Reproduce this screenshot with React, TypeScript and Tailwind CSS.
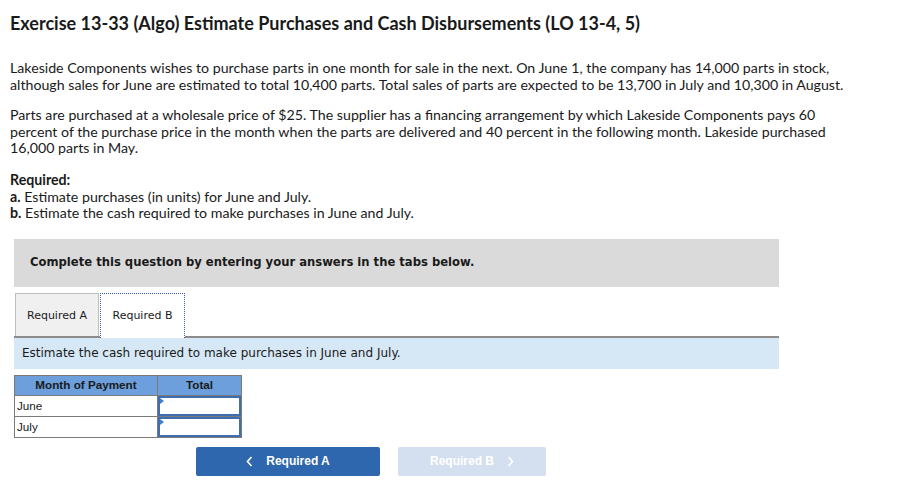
import React from 'react';

const body = "font-['Lato','Open_Sans',sans-serif]";
const verdana = "font-['DejaVu_Sans','Verdana',sans-serif]";
const arial = "font-['Liberation_Sans','Arial',sans-serif]";

function AnswerCell() {
  return (
    <td className="border border-[#7a7a7a] p-0 h-[20px]">
      <div className="relative h-[20px] border-2 border-[#3f6eb0] bg-white">
        <span className="absolute left-0 top-0 w-0 h-0 border-t-[3px] border-b-[3px] border-l-[4px] border-t-transparent border-b-transparent border-l-[#3f7fd0]" />
      </div>
    </td>
  );
}

function Chevron({ dir }: { dir: 'left' | 'right' }) {
  return (
    <svg width="7" height="11" viewBox="0 0 7 11" fill="none" stroke="currentColor" strokeWidth="1.6">
      {dir === 'left' ? <path d="M5.5 1 L1.5 5.5 L5.5 10" /> : <path d="M1.5 1 L5.5 5.5 L1.5 10" />}
    </svg>
  );
}

export default function App() {
  return (
    <div className="w-[920px] h-[492px] bg-white text-[#1a1a1a] overflow-hidden">
      <div className="pl-[10px] pt-[12px] whitespace-nowrap">
        <h1 className={`${body} font-bold text-[18px] leading-[22px]`}>
          Exercise 13-33 (Algo) Estimate Purchases and Cash Disbursements (LO 13-4, 5)
        </h1>

        <p className={`${body} text-[14.2px] leading-[16.5px] mt-[26px]`}>
          Lakeside Components wishes to purchase parts in one month for sale in the next. On June 1, the company has 14,000 parts in stock,
          <br />
          although sales for June are estimated to total 10,400 parts. Total sales of parts are expected to be 13,700 in July and 10,300 in August.
        </p>

        <p className={`${body} text-[14.2px] leading-[16.5px] mt-[14px]`}>
          Parts are purchased at a wholesale price of $25. The supplier has a financing arrangement by which Lakeside Components pays 60
          <br />
          percent of the purchase price in the month when the parts are delivered and 40 percent in the following month. Lakeside purchased
          <br />
          16,000 parts in May.
        </p>

        <div className={`${body} text-[14.2px] leading-[16.5px] mt-[15.5px]`}>
          <div className="font-bold">Required:</div>
          <div><span className="font-bold">a.</span> Estimate purchases (in units) for June and July.</div>
          <div><span className="font-bold">b.</span> Estimate the cash required to make purchases in June and July.</div>
        </div>
      </div>

      <div className="ml-[14px] w-[765px]">
        <div className={`${verdana} mt-[17px] h-[48px] bg-[#dadada] flex items-center pl-[16px] text-[11.6px] font-bold`}>
          Complete this question by entering your answers in the tabs below.
        </div>

        <div className={`${verdana} mt-[6px] flex items-end text-[11px] border-b-2 border-[#8c8c8c] pl-[1px]`}>
          <div className="w-[84px] h-[43px] pt-[3px] flex items-center justify-center bg-[#f0f0f0] border border-b-0 border-[#bdbdbd]">
            Required A
          </div>
          <div className="ml-[1px] -mb-[2px] w-[85px] h-[45px] pt-[1px] flex items-center justify-center bg-white border border-b-0 border-dotted border-[#2f5fa8]">
            Required B
          </div>
        </div>

        <div className={`${verdana} h-[31px] bg-[#d6e8f6] flex items-center pl-[8px] text-[12px]`}>
          Estimate the cash required to make purchases in June and July.
        </div>

        <table className={`${arial} mt-[6px] border-collapse text-[11.7px]`}>
          <thead>
            <tr className="bg-[#6c9fdc] h-[20px]">
              <th className="w-[143px] border border-[#7a7a7a] font-bold text-[#1a1a1a] p-0">Month of Payment</th>
              <th className="w-[84px] border border-[#7a7a7a] font-bold text-[#1a1a1a] p-0">Total</th>
            </tr>
          </thead>
          <tbody>
            <tr>
              <td className="border border-[#7a7a7a] pl-[2px] h-[20px] p-0">June</td>
              <AnswerCell />
            </tr>
            <tr>
              <td className="border border-[#7a7a7a] pl-[2px] h-[20px] p-0">July</td>
              <AnswerCell />
            </tr>
          </tbody>
        </table>

        <div className={`${arial} mt-[9px] ml-[182px] flex gap-[18px] text-[12px] font-bold text-white`}>
          <button className="w-[184px] h-[29px] rounded-[2px] bg-[#2e67ae] flex items-center justify-center gap-[13px]">
            <Chevron dir="left" />
            <span>Required A</span>
          </button>
          <button className="w-[148px] h-[29px] rounded-[2px] bg-[#d4e0ef] flex items-center justify-center gap-[13px]">
            <span>Required B</span>
            <Chevron dir="right" />
          </button>
        </div>
      </div>
    </div>
  );
}
